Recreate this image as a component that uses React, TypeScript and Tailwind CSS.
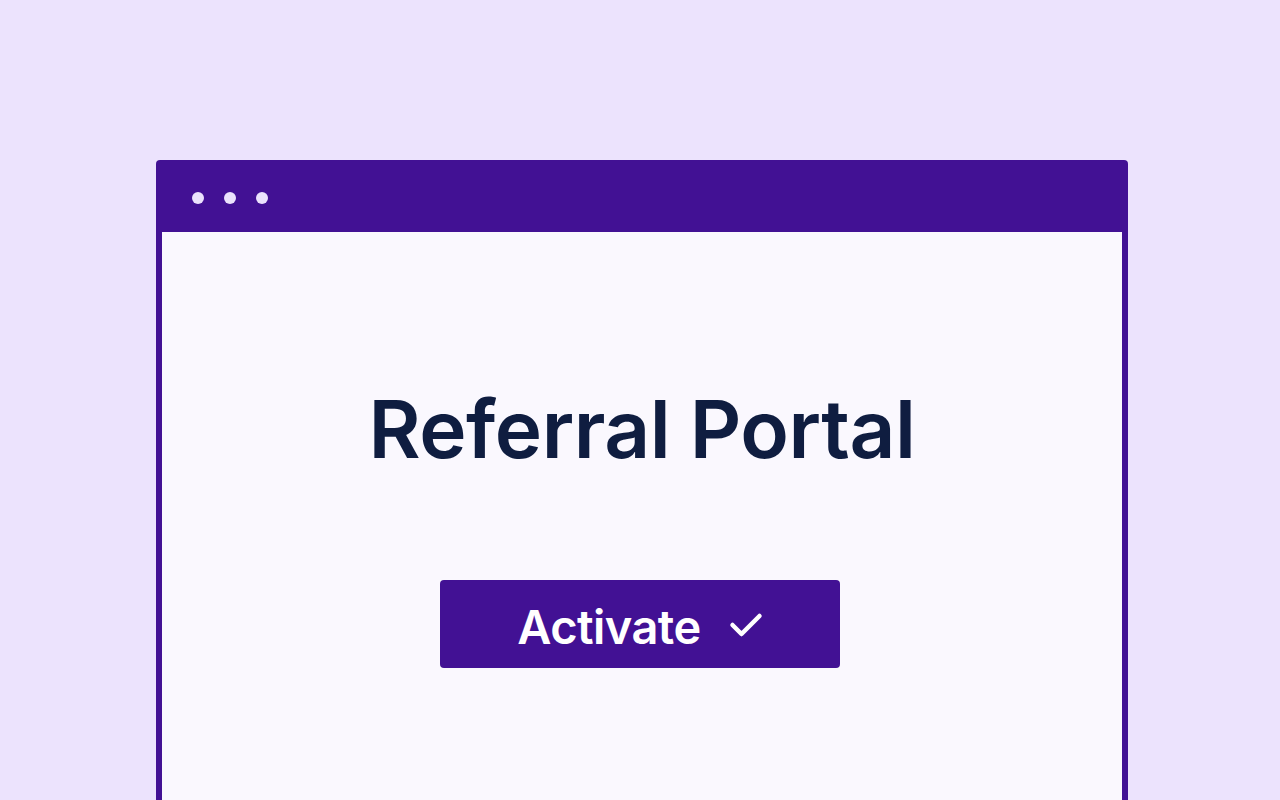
export default function App() {
  return (
    <div className="flex h-[800px] w-full justify-center overflow-hidden bg-[#ece3fd] pt-[160px] font-['Inter',sans-serif]">
      <div className="ml-[4px] flex h-[700px] w-[972px] flex-col rounded-t-[4px] bg-[#421194] px-[6px]">
        {/* title bar */}
        <div className="flex h-[72px] shrink-0 items-center gap-[20px] pl-[30px] pt-[4px]">
          <span className="h-[12px] w-[12px] rounded-full bg-[#ebe2fd]" />
          <span className="h-[12px] w-[12px] rounded-full bg-[#ebe2fd]" />
          <span className="h-[12px] w-[12px] rounded-full bg-[#ebe2fd]" />
        </div>

        <div className="flex flex-1 flex-col items-center bg-[#faf8fe] pt-[157px]">
          <h1 className="text-[80px] font-semibold leading-none tracking-[-0.006em] text-[#0f1d40]">
            Referral Portal
          </h1>

          <button className="-ml-[4px] mt-[111px] flex h-[88px] w-[400px] items-center justify-center gap-[28px] rounded-[4px] bg-[#421194] pt-[5px] text-white">
            <span className="text-[47px] font-semibold leading-none tracking-[-0.012em]">Activate</span>
            <svg width="34" height="26" viewBox="0 0 34 26" fill="none" className="-mt-[3px]">
              <path d="M3.5 13 L12.5 22 L30.5 4" stroke="white" strokeWidth="4.5" strokeLinecap="round" strokeLinejoin="round" />
            </svg>
          </button>
        </div>
      </div>
    </div>
  );
}
